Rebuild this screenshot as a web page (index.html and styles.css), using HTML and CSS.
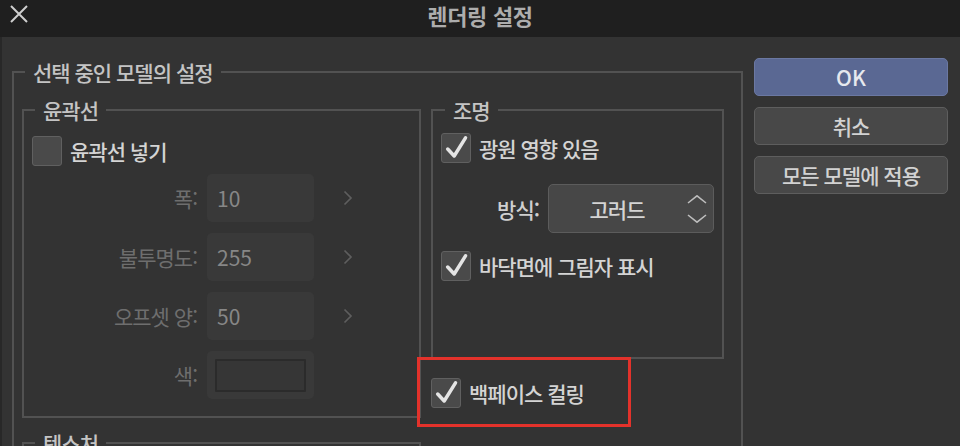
FILE: index.html
```html
<!DOCTYPE html>
<html lang="ko">
<head>
<meta charset="utf-8">
<title>렌더링 설정</title>
<link rel="stylesheet" href="styles.css">
</head>
<body>
<div class="dialog">
  <header class="titlebar">
    <div class="tb-left">
      <svg class="close" width="18" height="18" viewBox="0 0 18 18"><path d="M1 1L17 17M17 1L1 17" stroke="#cfcfcf" stroke-width="2" fill="none"/></svg>
    </div>
    <div class="title">렌더링 설정</div>
    <div class="tb-right"></div>
  </header>

  <main class="main">
    <fieldset class="group outer">
      <legend class="legend outer-legend">선택 중인 모델의 설정</legend>
      <div class="cols">
        <div class="col">
          <fieldset class="group outline">
            <legend class="legend inner-legend">윤곽선</legend>
            <label class="check">
              <span class="box"></span>
              <span class="check-text">윤곽선 넣기</span>
            </label>
            <div class="rows">
              <div class="row">
                <span class="row-label">폭:</span>
                <span class="field">10</span>
                <svg class="arrow" width="10" height="16" viewBox="0 0 10 16"><path d="M1.5 1.5L8 8L1.5 14.5" stroke="#5e5e5e" stroke-width="1.7" fill="none"/></svg>
              </div>
              <div class="row">
                <span class="row-label">불투명도:</span>
                <span class="field">255</span>
                <svg class="arrow" width="10" height="16" viewBox="0 0 10 16"><path d="M1.5 1.5L8 8L1.5 14.5" stroke="#5e5e5e" stroke-width="1.7" fill="none"/></svg>
              </div>
              <div class="row">
                <span class="row-label">오프셋 양:</span>
                <span class="field">50</span>
                <svg class="arrow" width="10" height="16" viewBox="0 0 10 16"><path d="M1.5 1.5L8 8L1.5 14.5" stroke="#5e5e5e" stroke-width="1.7" fill="none"/></svg>
              </div>
              <div class="row">
                <span class="row-label">색:</span>
                <span class="field swatch-field"><span class="swatch"></span></span>
              </div>
            </div>
          </fieldset>
          <fieldset class="group texture">
            <legend class="legend inner-legend">텍스처</legend>
          </fieldset>
        </div>

        <div class="col">
          <fieldset class="group light">
            <legend class="legend light-legend">조명</legend>
            <label class="check">
              <span class="box checked"><svg width="28" height="28" viewBox="0 0 28 28"><path d="M5.7 15L12.2 22L23.5 3.8" stroke="#e4e4e4" stroke-width="3.5" fill="none" stroke-linecap="round" stroke-linejoin="round"/></svg></span>
              <span class="check-text">광원 영향 있음</span>
            </label>
            <div class="select-row">
              <span class="select-label">방식:</span>
              <div class="select">
                <span class="select-value">고러드</span>
                <svg class="updown" width="20" height="28" viewBox="0 0 20 28"><path d="M1 8L10 0.8L19 8M1 20L10 27.2L19 20" stroke="#bdbdbd" stroke-width="1.6" fill="none"/></svg>
              </div>
            </div>
            <label class="check shadow-check">
              <span class="box checked"><svg width="28" height="28" viewBox="0 0 28 28"><path d="M5.7 15L12.2 22L23.5 3.8" stroke="#e4e4e4" stroke-width="3.5" fill="none" stroke-linecap="round" stroke-linejoin="round"/></svg></span>
              <span class="check-text">바닥면에 그림자 표시</span>
            </label>
          </fieldset>
          <label class="check backface">
            <span class="box checked"><svg width="28" height="28" viewBox="0 0 28 28"><path d="M5.7 15L12.2 22L23.5 3.8" stroke="#e4e4e4" stroke-width="3.5" fill="none" stroke-linecap="round" stroke-linejoin="round"/></svg></span>
            <span class="check-text">백페이스 컬링</span>
            <span class="highlight"></span>
          </label>
        </div>
      </div>
    </fieldset>

    <div class="buttons">
      <button class="btn primary">OK</button>
      <button class="btn">취소</button>
      <button class="btn">모든 모델에 적용</button>
    </div>
  </main>
</div>
</body>
</html>
```

FILE: styles.css
```css
* { box-sizing: border-box; }

html, body {
  margin: 0;
  padding: 0;
  background: #333333;
}

body {
  width: 960px;
  height: 446px;
  overflow: hidden;
  font-family: "Noto Sans CJK KR", "Noto Sans", sans-serif;
  color: #d2d2d2;
}

.dialog {
  width: 960px;
  height: 446px;
  display: flex;
  flex-direction: column;
}

.titlebar {
  height: 37px;
  flex: none;
  background: #1f1f1f;
  display: grid;
  grid-template-columns: 1fr auto 1fr;
  align-items: start;
}

.tb-left {
  padding: 5px 0 0 10px;
  display: flex;
}

.title {
  font-size: 22px;
  line-height: 30px;
  font-weight: 700;
  letter-spacing: -0.3px;
  color: #adadad;
}

.main {
  flex: 1;
  display: flex;
  gap: 11px;
  padding: 21px 12px 0 10px;
  border-left: 2px solid #282828;
  align-items: flex-start;
}

/* fieldsets */
.group {
  margin: 0;
  border: 2px solid #525252;
  min-inline-size: 0;
}

.legend {
  font-size: 21px;
  line-height: 28px;
  font-weight: 500;
  letter-spacing: -1px;
  padding: 0 8px;
  color: #c4c4c4;
}

.outer {
  width: 731px;
  height: 420px;
  padding: 10px 17px 0 8px;
}

.outer-legend { margin-left: 3px; }
.inner-legend { margin-left: 3px; }
.light-legend { margin-left: 4px; }

.cols {
  display: grid;
  grid-template-columns: 399px 293px;
  column-gap: 10px;
  align-items: start;
}

.col {
  display: flex;
  flex-direction: column;
}

.outline {
  padding: 12px 8px 17px 8px;
}

.texture {
  margin-top: 11px;
  padding: 0 8px;
  height: 80px;
}

.light {
  padding: 9px 8px 76px 8px;
}

/* checkbox */
.check {
  display: flex;
  align-items: center;
  gap: 8px;
  height: 30px;
}

.box {
  width: 30px;
  height: 30px;
  flex: none;
  border: 1px solid #606060;
  border-radius: 3px;
  background: #4a4a4a;
  display: flex;
  align-items: center;
  justify-content: center;
}

.check-text {
  font-size: 21px;
  font-weight: 500;
  letter-spacing: -1px;
  line-height: 30px;
  color: #d4d4d4;
}

/* outline rows */
.rows {
  display: flex;
  flex-direction: column;
  gap: 11px;
  margin-top: 8px;
}

.row {
  display: flex;
  align-items: center;
  height: 48px;
}

.row-label {
  width: 165px;
  margin-right: 10px;
  text-align: right;
  font-size: 21px;
  letter-spacing: -1px;
  color: #6e6e6e;
}

.field {
  width: 107px;
  height: 48px;
  border-radius: 5px;
  background: #393939;
  padding-left: 10px;
  display: flex;
  align-items: center;
  font-size: 21px;
  color: #878787;
}

.swatch-field {
  padding: 0 8px;
}

.swatch {
  width: 91px;
  height: 33px;
  border: 2px solid #2b2b2b;
  background: #363636;
  border-radius: 1px;
}

.arrow {
  margin-left: 29px;
}

/* select */
.select-row {
  display: flex;
  align-items: center;
  margin-top: 21px;
}

.select-label {
  width: 98px;
  margin-right: 9px;
  text-align: right;
  font-size: 21px;
  font-weight: 500;
  letter-spacing: -1px;
  color: #cfcfcf;
}

.select {
  width: 166px;
  height: 49px;
  border: 1px solid #5c5c5c;
  border-radius: 5px;
  background: #474747;
  display: flex;
  align-items: center;
}

.select-value {
  flex: 1;
  text-align: center;
  font-size: 21px;
  font-weight: 500;
  letter-spacing: -1px;
  color: #d4d4d4;
}

.updown {
  margin: 0 6px 0 2px;
}

.shadow-check {
  margin-top: 18px;
}

/* backface */
.backface {
  position: relative;
  margin-top: 19px;
}

.highlight {
  position: absolute;
  left: -14px;
  top: -21px;
  width: 214px;
  height: 70px;
  border: 3px solid #e3322b;
  pointer-events: none;
}

/* buttons */
.buttons {
  width: 194px;
  display: flex;
  flex-direction: column;
  gap: 11px;
}

.btn {
  height: 38px;
  border: 1px solid #5e5e5e;
  border-radius: 5px;
  background: #484848;
  color: #d2d2d2;
  font-family: "Noto Sans CJK KR", "Noto Sans", sans-serif;
  font-size: 21px;
  font-weight: 500;
  letter-spacing: -1px;
  line-height: 1;
  padding: 0;
}

.btn.primary {
  background: #5a6893;
  border-color: #6b78a2;
  color: #e6e8ee;
  letter-spacing: 0;
}
```
